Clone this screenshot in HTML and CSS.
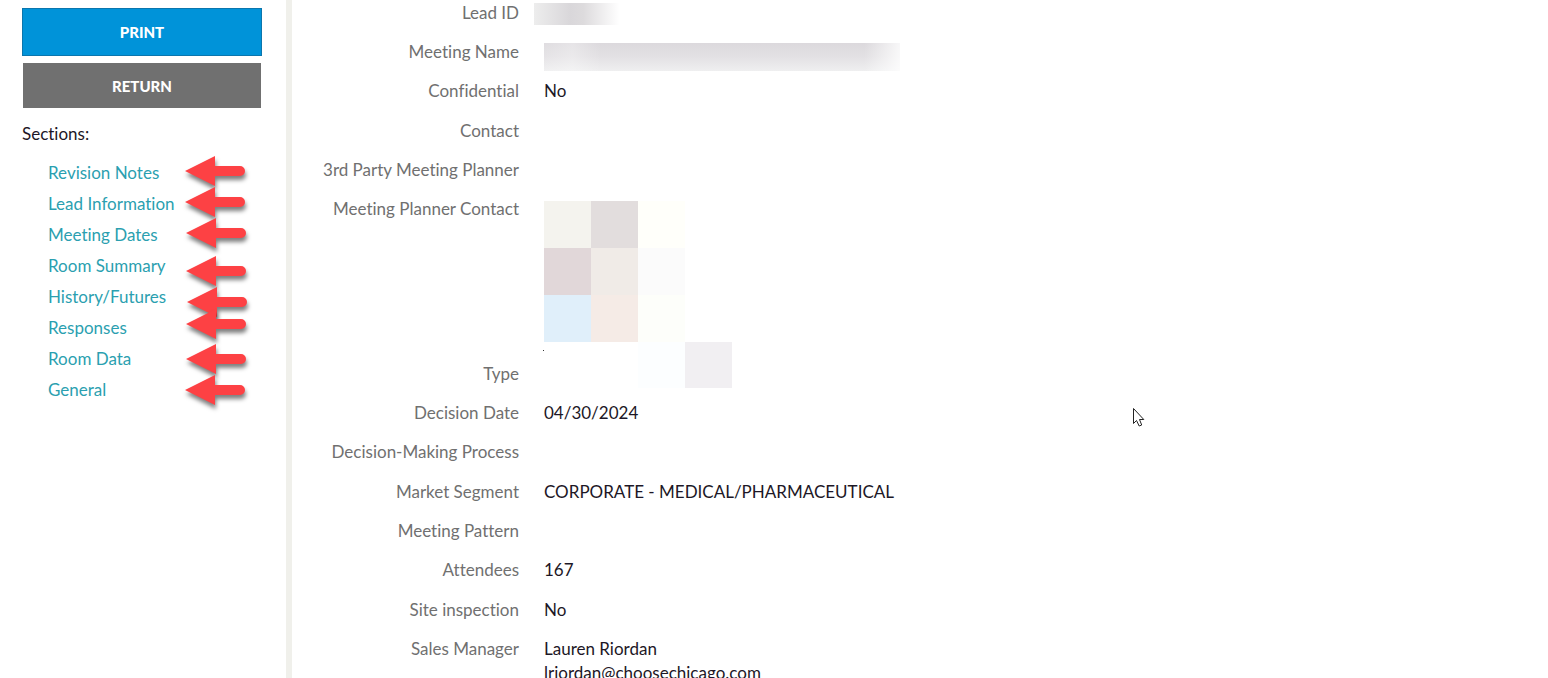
FILE: index.html
```html
<!DOCTYPE html>
<html lang="en">
<head>
<meta charset="utf-8">
<title>Lead Details</title>
<link rel="stylesheet" href="styles.css">
</head>
<body>
<div class="page">
  <aside class="sidebar">
    <div class="actions">
      <button type="button" class="button button-print">PRINT</button>
      <button type="button" class="button button-return">RETURN</button>
    </div>
    <p class="sections-title" id="sections">Sections:</p>
    <nav aria-labelledby="sections">
      <ul class="section-list">
        <li><a href="#revision-notes">Revision Notes</a></li>
        <li><a href="#lead-information">Lead Information</a></li>
        <li><a href="#meeting-dates">Meeting Dates</a></li>
        <li><a href="#room-summary">Room Summary</a></li>
        <li><a href="#history-futures">History/Futures</a></li>
        <li><a href="#responses">Responses</a></li>
        <li><a href="#room-data">Room Data</a></li>
        <li><a href="#general">General</a></li>
      </ul>
    </nav>
  </aside>
  <main class="details">
    <dl class="fields">
      <div class="field"><dt>Lead ID</dt><dd><span class="redacted redacted-id"></span></dd></div>
      <div class="field"><dt>Meeting Name</dt><dd><span class="redacted redacted-name"></span></dd></div>
      <div class="field"><dt>Confidential</dt><dd>No</dd></div>
      <div class="field"><dt>Contact</dt><dd></dd></div>
      <div class="field"><dt>3rd Party Meeting Planner</dt><dd></dd></div>
      <div class="field field-planner"><dt>Meeting Planner Contact</dt><dd>
        <svg class="mosaic" width="190" height="188" viewBox="-2 0 190 188" aria-hidden="true" shape-rendering="crispEdges">
          <path fill="#f4f3ee" d="M0 0h47v47H0z"/>
          <path fill="#e2dddd" d="M47 0h47v47H47z"/>
          <path fill="#fffffa" d="M94 0h47v47H94z"/>
          <path fill="#e1d7d9" d="M0 47h47v47H0z"/>
          <path fill="#f0ebe7" d="M47 47h47v47H47z"/>
          <path fill="#fbfbfb" d="M94 47h47v47H94z"/>
          <path fill="#e0effa" d="M0 94h47v47H0z"/>
          <path fill="#f5ebe6" d="M47 94h47v47H47z"/>
          <path fill="#fdfefa" d="M94 94h47v47H94z"/>
          <path fill="#fcfeff" d="M94 141h47v46H94z"/>
          <path fill="#f1eff2" d="M141 141h47v46h-47z"/>
          <path fill="#333" d="M-1 149h1v1h-1z"/>
        </svg>
      </dd></div>
      <div class="field"><dt>Type</dt><dd></dd></div>
      <div class="field"><dt>Decision Date</dt><dd>04/30/2024</dd></div>
      <div class="field"><dt>Decision-Making Process</dt><dd></dd></div>
      <div class="field"><dt>Market Segment</dt><dd>CORPORATE - MEDICAL/PHARMACEUTICAL</dd></div>
      <div class="field"><dt>Meeting Pattern</dt><dd></dd></div>
      <div class="field"><dt>Attendees</dt><dd>167</dd></div>
      <div class="field"><dt>Site inspection</dt><dd>No</dd></div>
      <div class="field"><dt>Sales Manager</dt><dd>Lauren Riordan<br>lriordan@choosechicago.com</dd></div>
    </dl>
  </main>
</div>
<svg class="arrows" width="80" height="270" viewBox="180 150 80 270" aria-hidden="true">
  <defs>
    <path id="arrow" d="M0 0L30 -15V-5H55a5 5 0 0 1 0 10H30V15z"/>
  </defs>
  <g fill="#fd4144">
    <use class="arrow" href="#arrow" x="185" y="171"/>
    <use class="arrow" href="#arrow" x="185" y="202"/>
    <use class="arrow" href="#arrow" x="186" y="233"/>
    <use class="arrow" href="#arrow" x="186" y="271"/>
    <use class="arrow" href="#arrow" x="187" y="302"/>
    <use class="arrow" href="#arrow" x="186" y="324"/>
    <use class="arrow" href="#arrow" x="186" y="359"/>
    <use class="arrow" href="#arrow" x="185" y="390"/>
  </g>
</svg>
<svg class="pointer" width="14" height="21" viewBox="0 0 14 21" aria-hidden="true">
  <path fill="#fff" stroke="#222" d="M1.500 1.500V16.500L4.500 13.500L7.200 19L9.700 18L7.500 12.500H11.800z"/>
</svg>
</body>
</html>
```
FILE: styles.css
```css
* {
  box-sizing: border-box;
}

body {
  margin: 0;
  height: 100vh;
  overflow: hidden;
  position: relative;
  background: #fff;
  color: #1d1726;
  font-family: Lato, "Open Sans", sans-serif;
  font-size: 17px;
  line-height: 24px;
  font-variant-ligatures: none;
}

.page {
  display: flex;
  min-height: 100%;
}

.sidebar {
  flex: 0 0 292px;
  padding: 8px 24px 0 22px;
  border-right: 6px solid #f0f0eb;
}

.actions {
  display: flex;
  flex-direction: column;
  gap: 7px;
}

.button {
  padding: 0;
  border: 0;
  color: #fff;
  font: 900 15px/24px Lato, "Open Sans", sans-serif;
}

.button-print {
  height: 48px;
  border: 1px solid #0b76ad;
  background: #0093d9;
}

.button-return {
  height: 45px;
  margin: 0 1px;
  background: #707070;
}

.sections-title {
  margin: 14px 0 15px;
}

.section-list {
  margin: 0;
  padding: 0 0 0 26px;
  list-style: none;
}

.section-list li {
  height: 31px;
}

.section-list a {
  color: #2b9fb0;
  text-decoration: none;
}

.details {
  flex: 1;
  min-width: 0;
}

.fields {
  margin: 0;
  padding-top: 1px;
}

.field {
  display: grid;
  grid-template-columns: 227px 1fr;
  column-gap: 25px;
  min-height: 39px;
}

.field:nth-child(3n) {
  min-height: 40px;
}

.field dt {
  color: #707070;
  text-align: right;
}

.field dd {
  margin: 0;
}

.field.field-planner {
  height: 165px;
}

.redacted {
  display: block;
}

.redacted-id {
  width: 90px;
  height: 22px;
  margin: 2px 0 0 -10px;
  background: linear-gradient(90deg, #ededed, #d9d7da 40%, #dddbdd 55%, #fff 95%);
}

.redacted-name {
  width: 356px;
  height: 28px;
  margin-top: 3px;
  background:
    linear-gradient(90deg, rgba(255, 255, 255, .1), rgba(255, 255, 255, .3) 8%, transparent 16%, transparent 90%, rgba(255, 255, 255, .8)),
    linear-gradient(#dcd9dd, #e3e1e4 50%, #efeff0);
}

.mosaic {
  display: block;
  margin: 4px 0 0 -2px;
}

.arrows {
  position: absolute;
  left: 180px;
  top: 150px;
  pointer-events: none;
}

.arrow {
  filter: drop-shadow(1px 4px 2px rgba(0, 0, 0, .5));
}

.pointer {
  position: absolute;
  left: 1132px;
  top: 407px;
  pointer-events: none;
}
```
